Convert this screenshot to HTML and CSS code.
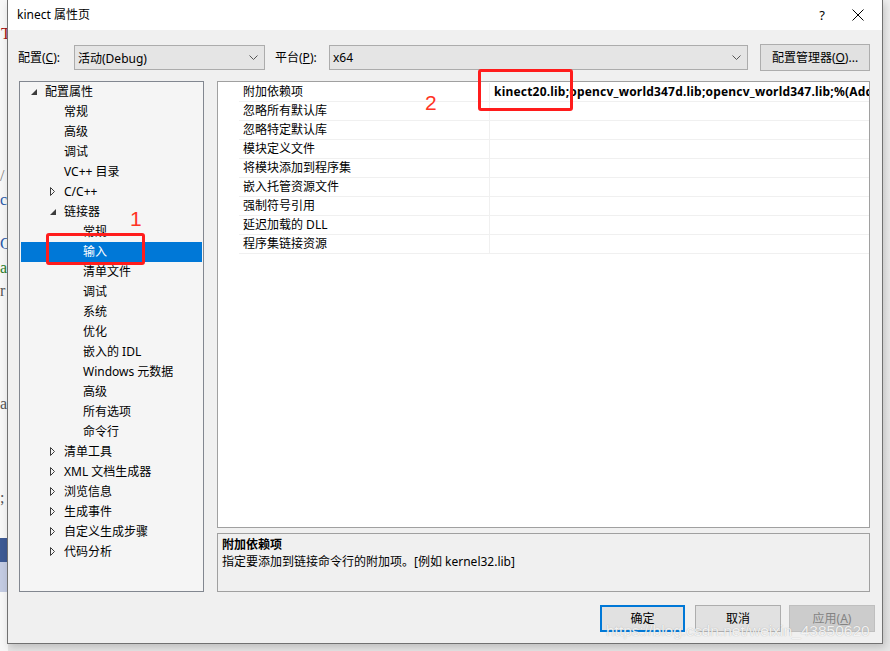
FILE: index.html
```html
<!DOCTYPE html>
<html lang="zh-CN">
<head>
<meta charset="utf-8">
<title>kinect 属性页</title>
<link rel="stylesheet" href="styles.css">
</head>
<body>
<div class="screen">
  <div class="backdrop">
    <span class="bg-glyph g1">T</span>
    <span class="bg-glyph g2">/</span>
    <span class="bg-glyph g3">c</span>
    <span class="bg-glyph g4">C</span>
    <span class="bg-glyph g5">a</span>
    <span class="bg-glyph g6">r</span>
    <span class="bg-glyph g7">a</span>
    <span class="bg-glyph g8">;</span>
    <div class="bg-band"></div>
    <div class="bg-band2"></div>
  </div>

  <div class="dialog">
    <div class="titlebar">
      <span class="title">kinect 属性页</span>
      <span class="help">?</span>
      <span class="close"><svg width="12" height="12" viewBox="0 0 12 12"><path d="M0.5 0.5 L11.5 11.5 M11.5 0.5 L0.5 11.5" stroke="#000" stroke-width="1" fill="none"/></svg></span>
    </div>

    <div class="body">
      <div class="config-row">
        <span class="lbl lbl1">配置(<u>C</u>):</span>
        <div class="combo combo1"><span>活动(Debug)</span><svg class="chev" width="9" height="5" viewBox="0 0 9 5"><path d="M0.5 0.5 L4.5 4.5 L8.5 0.5" stroke="#555" fill="none"/></svg></div>
        <span class="lbl lbl2">平台(<u>P</u>):</span>
        <div class="combo combo2"><span>x64</span><svg class="chev" width="9" height="5" viewBox="0 0 9 5"><path d="M0.5 0.5 L4.5 4.5 L8.5 0.5" stroke="#555" fill="none"/></svg></div>
        <button class="btn btn-mgr">配置管理器(<u>O</u>)...</button>
      </div>

      <div class="main">
        <div class="tree">
          <div class="node l0"><span class="tg"><svg width="16" height="20" viewBox="0 0 16 20"><path d="M8 7 L8 13 L2 13 Z" fill="#3c3c3c"/></svg></span>配置属性</div>
          <div class="node l1"><span class="tg"></span>常规</div>
          <div class="node l1"><span class="tg"></span>高级</div>
          <div class="node l1"><span class="tg"></span>调试</div>
          <div class="node l1"><span class="tg"></span>VC++ 目录</div>
          <div class="node l1"><span class="tg"><svg width="16" height="20" viewBox="0 0 16 20"><path d="M2.5 5.5 L6.5 9.5 L2.5 13.5 Z" stroke="#3c3c3c" fill="none"/></svg></span>C/C++</div>
          <div class="node l1"><span class="tg"><svg width="16" height="20" viewBox="0 0 16 20"><path d="M8 7 L8 13 L2 13 Z" fill="#3c3c3c"/></svg></span>链接器</div>
          <div class="node l2"><span class="tg"></span>常规</div>
          <div class="node l2 sel"><span class="tg"></span>输入</div>
          <div class="node l2"><span class="tg"></span>清单文件</div>
          <div class="node l2"><span class="tg"></span>调试</div>
          <div class="node l2"><span class="tg"></span>系统</div>
          <div class="node l2"><span class="tg"></span>优化</div>
          <div class="node l2"><span class="tg"></span>嵌入的 IDL</div>
          <div class="node l2"><span class="tg"></span>Windows 元数据</div>
          <div class="node l2"><span class="tg"></span>高级</div>
          <div class="node l2"><span class="tg"></span>所有选项</div>
          <div class="node l2"><span class="tg"></span>命令行</div>
          <div class="node l1"><span class="tg"><svg width="16" height="20" viewBox="0 0 16 20"><path d="M2.5 5.5 L6.5 9.5 L2.5 13.5 Z" stroke="#3c3c3c" fill="none"/></svg></span>清单工具</div>
          <div class="node l1"><span class="tg"><svg width="16" height="20" viewBox="0 0 16 20"><path d="M2.5 5.5 L6.5 9.5 L2.5 13.5 Z" stroke="#3c3c3c" fill="none"/></svg></span>XML 文档生成器</div>
          <div class="node l1"><span class="tg"><svg width="16" height="20" viewBox="0 0 16 20"><path d="M2.5 5.5 L6.5 9.5 L2.5 13.5 Z" stroke="#3c3c3c" fill="none"/></svg></span>浏览信息</div>
          <div class="node l1"><span class="tg"><svg width="16" height="20" viewBox="0 0 16 20"><path d="M2.5 5.5 L6.5 9.5 L2.5 13.5 Z" stroke="#3c3c3c" fill="none"/></svg></span>生成事件</div>
          <div class="node l1"><span class="tg"><svg width="16" height="20" viewBox="0 0 16 20"><path d="M2.5 5.5 L6.5 9.5 L2.5 13.5 Z" stroke="#3c3c3c" fill="none"/></svg></span>自定义生成步骤</div>
          <div class="node l1"><span class="tg"><svg width="16" height="20" viewBox="0 0 16 20"><path d="M2.5 5.5 L6.5 9.5 L2.5 13.5 Z" stroke="#3c3c3c" fill="none"/></svg></span>代码分析</div>
        </div>

        <div class="grid">
          <div class="prow"><div class="pname">附加依赖项</div><div class="pval bold">kinect20.lib;opencv_world347d.lib;opencv_world347.lib;%(AdditionalDependencies)</div></div>
          <div class="prow"><div class="pname">忽略所有默认库</div><div class="pval"></div></div>
          <div class="prow"><div class="pname">忽略特定默认库</div><div class="pval"></div></div>
          <div class="prow"><div class="pname">模块定义文件</div><div class="pval"></div></div>
          <div class="prow"><div class="pname">将模块添加到程序集</div><div class="pval"></div></div>
          <div class="prow"><div class="pname">嵌入托管资源文件</div><div class="pval"></div></div>
          <div class="prow"><div class="pname">强制符号引用</div><div class="pval"></div></div>
          <div class="prow"><div class="pname">延迟加载的 DLL</div><div class="pval"></div></div>
          <div class="prow"><div class="pname">程序集链接资源</div><div class="pval"></div></div>
        </div>

        <div class="desc">
          <div class="desc-title">附加依赖项</div>
          <div class="desc-text">指定要添加到链接命令行的附加项。[例如 kernel32.lib]</div>
        </div>
      </div>

      <div class="buttons">
        <button class="btn btn-ok">确定</button>
        <button class="btn btn-cancel">取消</button>
        <button class="btn btn-apply" disabled>应用(<u>A</u>)</button>
      </div>
    </div>
  </div>

  <div class="mark box1"></div>
  <div class="mark box2"></div>
  <span class="mark-num num1">1</span>
  <span class="mark-num num2">2</span>
  <span class="watermark">https://blog.csdn.net/weixin_43850620</span>
</div>
</body>
</html>
```

FILE: styles.css
```css
* { box-sizing: border-box; }
html, body { margin: 0; padding: 0; }
body {
  font-family: "Noto Sans", "Noto Sans CJK SC", sans-serif;
  font-size: 12px;
  color: #000;
  background: #ececec;
}
.screen {
  position: relative;
  width: 890px;
  height: 651px;
  overflow: hidden;
  background: linear-gradient(#efefef, #e6e6e6);
}

/* background (behind the dialog) */
.backdrop {
  position: absolute;
  left: 0; top: 0;
  width: 8px; height: 651px;
  background: #f7f7f7;
}
.bg-glyph {
  position: absolute;
  left: 0;
  font-family: "Liberation Serif", serif;
  font-size: 16px;
  line-height: 16px;
}
.g1 { top: 26px; color: #a31515; left: 1px; }
.g2 { top: 168px; color: #808080; }
.g3 { top: 192px; color: #2b5aa8; }
.g4 { top: 236px; color: #2b5aa8; }
.g5 { top: 260px; color: #2a7d2a; }
.g6 { top: 283px; color: #555; }
.g7 { top: 396px; color: #555; }
.g8 { top: 490px; color: #555; }
.bg-band { position: absolute; left: 0; top: 538px; width: 8px; height: 24px; background: #3d5a94; }
.bg-band2 { position: absolute; left: 0; top: 562px; width: 8px; height: 30px; background: #c3cbe2; }

/* dialog window */
.dialog {
  margin-left: 7px;
  width: 876px;
  height: 644px;
  border: 1px solid #717171;
  border-top: none;
  background: #f0f0f0;
  position: relative;
  box-shadow: 2px 3px 8px rgba(0,0,0,0.18);
}
.titlebar {
  height: 30px;
  background: #fff;
  display: flex;
  align-items: center;
  padding-left: 9px;
}
.title { flex: 1; line-height: 16px; }
.help { width: 20px; text-align: center; font-size: 13px; margin-right: 20px; }
.close { width: 14px; height: 12px; margin-right: 16px; display: flex; }

.body { height: 613px; }

.config-row {
  display: flex;
  align-items: center;
  height: 27px;
  margin-top: 14px;
  padding-left: 10px;
}
.lbl { line-height: 16px; white-space: nowrap; }
.lbl1 { width: 56px; }
.lbl2 { width: 54px; margin-left: 10px; }
.combo {
  height: 25px;
  background: #e5e5e5;
  border: 1px solid #acacac;
  display: flex;
  align-items: center;
  padding-left: 3px;
  padding-right: 6px;
  justify-content: space-between;
}
.combo1 { width: 191px; }
.combo2 { width: 419px; }
.chev { display: block; }

.btn {
  font-family: inherit;
  font-size: 12px;
  color: #000;
  background: #e1e1e1;
  border: 1px solid #adadad;
  height: 27px;
  padding: 0;
  line-height: 16px;
}
.btn-mgr { width: 110px; margin-left: 12px; }

.main {
  display: grid;
  grid-template-columns: 185px 653px;
  grid-template-rows: 447px 59px;
  column-gap: 13px;
  row-gap: 5px;
  margin-top: 10px;
  padding-left: 11px;
}

.tree {
  grid-row: 1 / 3;
  background: #f5f5f5;
  border: 1px solid #828790;
  padding: 0 1px;
}
.node {
  display: flex;
  align-items: center;
  height: 20px;
  line-height: 16px;
  white-space: nowrap;
}
.node.l0 { padding-left: 8px; }
.node.l1 { padding-left: 27px; }
.node.l2 { padding-left: 46px; }
.tg { width: 16px; height: 20px; flex: none; display: flex; }
.node.sel { background: #0078d7; color: #fff; }

.grid {
  background: #fff;
  border: 1px solid #a0a0a0;
  padding-left: 21px;
  padding-top: 1px;
  overflow: hidden;
}
.prow {
  display: flex;
  height: 19px;
  border-bottom: 1px solid #f0f0f0;
}
.pname {
  width: 251px;
  flex: none;
  padding-left: 4px;
  line-height: 18px;
  border-right: 1px solid #f0f0f0;
  white-space: nowrap;
}
.pval {
  flex: 1;
  padding-left: 4px;
  line-height: 18px;
  white-space: nowrap;
  overflow: hidden;
}
.pval.bold { font-weight: 700; letter-spacing: 0.2px; }

.desc {
  border: 1px solid #a0a0a0;
  background: #f0f0f0;
  padding: 2px 4px;
}
.desc-title { font-weight: 700; line-height: 17px; }
.desc-text { line-height: 17px; }

.buttons {
  display: flex;
  justify-content: flex-end;
  margin-top: 13px;
  padding-right: 7px;
}
.btn-ok { width: 85px; border: 2px solid #0078d7; margin-right: 10px; }
.btn-cancel { width: 86px; margin-right: 8px; }
.btn-apply { width: 86px; background: #cccccc; border-color: #bfbfbf; color: #838383; }

/* annotations drawn over the screenshot */
.mark {
  position: absolute;
  border: 3px solid #ff1c1c;
  border-radius: 3px;
}
.box1 { left: 46px; top: 233px; width: 99px; height: 32px; }
.box2 { left: 478px; top: 69px; width: 95px; height: 42px; }
.mark-num {
  position: absolute;
  font-family: "Liberation Sans", sans-serif;
  font-size: 21px;
  line-height: 22px;
  color: #ff3324;
}
.num1 { left: 130px; top: 208px; }
.num2 { left: 425px; top: 92px; }
.watermark {
  position: absolute;
  left: 606px;
  top: 622px;
  font-family: "Liberation Sans", sans-serif;
  font-size: 15.5px;
  line-height: 18px;
  color: rgba(255,255,255,0.85);
  text-shadow: 0 0 1px rgba(120,120,120,0.6);
  white-space: nowrap;
}
```
